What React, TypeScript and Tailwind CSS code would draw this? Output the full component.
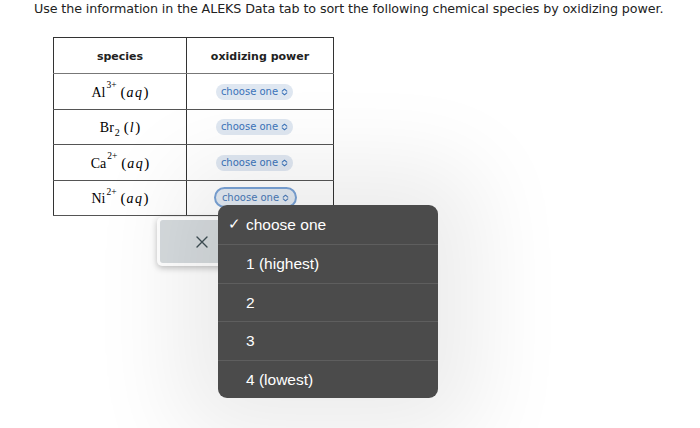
import React from 'react';

const serif = { fontFamily: '"Liberation Serif", "Times New Roman", serif' };

interface ISpecies {
  base: string;
  sub?: string;
  sup?: string;
  phase: string;
}

const rows: ISpecies[] = [
  { base: 'Al', sup: '3+', phase: 'aq' },
  { base: 'Br', sub: '2', phase: 'l' },
  { base: 'Ca', sup: '2+', phase: 'aq' },
  { base: 'Ni', sup: '2+', phase: 'aq' },
];

const Chevrons = () => (
  <svg width="7" height="8" viewBox="0 0 7 8" className="ml-[3px]">
    <path d="M1.2 3.2L3.5 1.2L5.8 3.2M1.2 4.8L3.5 6.8L5.8 4.8" fill="none" stroke="currentColor" strokeWidth="1.1" strokeLinecap="round" strokeLinejoin="round" />
  </svg>
);

const Species: React.FC<{ s: ISpecies }> = ({ s }) => (
  <span className="inline-flex items-end text-[14px] text-black leading-none pt-[6px]" style={serif}>
    <span>{s.base}</span>
    {s.sub && <span className="text-[10px] relative top-[3px] ml-[1px]">{s.sub}</span>}
    {s.sup && <span className="text-[9.5px] relative -top-[9px] ml-[1px]">{s.sup}</span>}
    <span className="ml-[4px] text-[15px]">(</span>
    <i className="tracking-[1.5px] pl-[1px]">{s.phase}</i>
    <span className="text-[15px]">)</span>
  </span>
);

const Choose: React.FC<{ focused?: boolean }> = ({ focused }) => (
  <span
    className={
      focused
        ? 'inline-flex items-center align-middle rounded-full bg-[#e3eaf3] text-[#4a7ab8] text-[10px] h-[21px] px-[6px] mr-[9px] border-2 border-[#7aa3d6]'
        : 'inline-flex items-center align-middle rounded-full bg-[#dfe7f1] text-[#3b73b9] text-[10px] h-[16px] px-[5px] mr-[11px]'
    }
    style={{ fontFamily: '"DejaVu Sans", Verdana, sans-serif' }}
  >
    choose one
    <Chevrons />
  </span>
);

export default function App() {
  return (
    <div className="relative w-[700px] h-[428px] bg-white overflow-hidden">
      <p
        className="pl-[34px] text-[12.7px] leading-[17px] text-[#222] whitespace-nowrap tracking-[-0.1px]"
        style={{ fontFamily: '"DejaVu Sans", Verdana, sans-serif' }}
      >
        Use the information in the ALEKS Data tab to sort the following chemical species by oxidizing power.
      </p>

      <table className="ml-[53px] mt-[20px] border-collapse border border-[#333]" style={{ fontFamily: '"DejaVu Sans", Verdana, sans-serif' }}>
        <thead>
          <tr className="h-[36px]">
            <th className="w-[133px] pt-[3px] border-r border-[#333] border-b border-b-[#777] text-[11px] font-bold text-[#222]">species</th>
            <th className="w-[147px] pt-[3px] border-b border-[#777] text-[11px] font-bold text-[#222]">oxidizing power</th>
          </tr>
        </thead>
        <tbody>
          {rows.map((r, i) => (
            <tr key={r.base} className="h-[35.5px]">
              <td className="border-r border-[#333] border-b border-b-[#555] text-center align-middle">
                <Species s={r} />
              </td>
              <td className="border-b border-[#555] text-center align-middle leading-none">
                <Choose focused={i === 3} />
              </td>
            </tr>
          ))}
        </tbody>
      </table>

      {/* close button behind the popup */}
      <div className="absolute left-[157px] top-[217px] w-[90px] h-[49px] rounded-[5px] bg-white p-[3px] shadow-[0_2px_6px_rgba(0,0,0,0.25)]">
        <div className="w-full h-full rounded-[3px] bg-[#d6dbde] flex items-center pl-[36px]">
          <svg width="12" height="12" viewBox="0 0 12 12">
            <path d="M1 1L11 11M11 1L1 11" stroke="#3f4f55" strokeWidth="1.4" strokeLinecap="round" />
          </svg>
        </div>
      </div>

      {/* native picker */}
      <div
        className="absolute left-[218px] top-[205px] w-[220px] rounded-[9px] bg-[#4b4b4b] text-white text-[15.5px] shadow-[0_0_90px_40px_rgba(0,0,0,0.08)]"
        style={{ fontFamily: '"Liberation Sans", Arial, sans-serif' }}
      >
        <div className="h-[39px] flex items-center pl-[10px]">
          <span className="w-[18px] text-[15px]">✓</span>
          <span>choose one</span>
        </div>
        {['1 (highest)', '2', '3', '4 (lowest)'].map((t) => (
          <div key={t} className="h-[38.5px] flex items-center pl-[28px] border-t border-[#5e5e5e]">
            {t}
          </div>
        ))}
      </div>
    </div>
  );
}
